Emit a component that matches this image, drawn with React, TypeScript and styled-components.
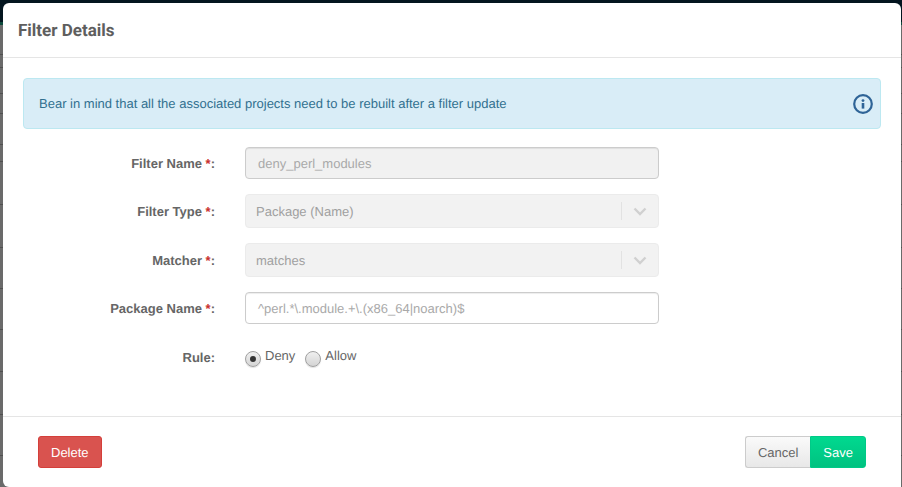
import React from "react";
import styled, { createGlobalStyle } from "styled-components";

const Global = createGlobalStyle`
  html, body { margin: 0; padding: 0; height: 100%; overflow: hidden; }
  body { background: #6b6b6b; font-family: "Liberation Sans", Arial, sans-serif; text-rendering: geometricPrecision; }
  #root { height: 100%; }
`;

const pageRules = [54, 67, 93, 113, 144, 161, 204, 247, 288, 329, 371, 414, 455]
  .map((y) => `linear-gradient(#505050, #505050) 0 ${y}px / 100% 1px no-repeat`)
  .join(",");

const Backdrop = styled.div`
  height: 487px;
  box-sizing: border-box;
  padding: 3px 1px 0 3px;
  overflow: hidden;
  background:
    linear-gradient(#03151f 0 22px, #0c4a3c 22px 25px, transparent 25px),
    ${pageRules},
    #6a6a6a;
`;

const Modal = styled.div`
  background: #fff;
  border-radius: 6px 6px 0 6px;
  height: 484px;
  display: flex;
  flex-direction: column;
  color: #666;
`;

const Header = styled.header`
  height: 55px;
  box-sizing: border-box;
  border-bottom: 1px solid #e5e5e5;
  padding: 1px 15px 0;
  display: flex;
  align-items: center;
`;

const Title = styled.h4`
  margin: 0;
  font: 700 17px/20px Roboto, "Liberation Sans", sans-serif;
  color: #5e5e5e;
`;

const Body = styled.div`
  height: 359px;
  box-sizing: border-box;
  border-bottom: 1px solid #e5e5e5;
  padding: 20px 20px 0 20px;
`;

const Alert = styled.div`
  height: 51px;
  box-sizing: border-box;
  background: #d9edf7;
  border: 1px solid #bce8f1;
  border-radius: 4px;
  color: #31708f;
  font-size: 13px;
  padding: 0 17px 0 15px;
  display: flex;
  align-items: center;
  justify-content: space-between;
`;

const InfoIcon = styled.svg`
  width: 20px;
  height: 20px;
  margin-right: -10px;
  flex: none;
`;

const Form = styled.div`
  margin-top: 18px;
  display: flex;
  flex-direction: column;
`;

const Row = styled.div<{ $h: number; $mb: number }>`
  display: grid;
  grid-template-columns: 192px 414px;
  column-gap: 30px;
  align-items: center;
  height: ${(p) => p.$h}px;
  margin-bottom: ${(p) => p.$mb}px;
`;

const Label = styled.label`
  font-size: 13px;
  font-weight: 700;
  text-align: right;
  color: #666;
`;

const Req = styled.span`
  color: #c9302c;
`;

const TextInput = styled.div<{ $disabled?: boolean }>`
  height: 32px;
  box-sizing: border-box;
  border: 1px solid #ccc;
  border-radius: 4px;
  padding: 0 12px;
  display: flex;
  align-items: center;
  font-size: 13px;
  color: #a9a9a9;
  background: ${(p) => (p.$disabled ? "#f1f1f1" : "#fff")};
  box-shadow: inset 0 1px 1px rgba(0, 0, 0, 0.075);
`;

const Select = styled.div`
  height: 34px;
  box-sizing: border-box;
  border: 1px solid #ebebeb;
  border-radius: 4px;
  background: #f2f2f2;
  padding: 0 10px;
  display: flex;
  align-items: center;
  justify-content: space-between;
  font-size: 13px;
  color: #a0a0a0;
`;

const Indicator = styled.div`
  display: flex;
  align-items: center;
  height: 18px;
  border-left: 1px solid #e2e2e2;
  padding-left: 11px;
  margin-right: 1px;
`;

const Radios = styled.div`
  display: flex;
  align-items: center;
  gap: 10px;
`;

const RadioLabel = styled.span`
  display: flex;
  align-items: flex-start;
  gap: 4px;
  font-size: 13px;
  line-height: 15px;
  color: #666;
`;

const RadioDot = styled.span<{ $on?: boolean }>`
  width: 16px;
  height: 16px;
  box-sizing: border-box;
  border-radius: 50%;
  border: 1px solid #a0a0a0;
  background: linear-gradient(#f0f0f0, #d4d4d4);
  box-shadow: 0 1px 1px rgba(0, 0, 0, 0.12);
  margin-top: 3px;
  display: flex;
  align-items: center;
  justify-content: center;
  &::after {
    content: "";
    width: 6px;
    height: 6px;
    border-radius: 50%;
    background: #333;
    display: ${(p) => (p.$on ? "block" : "none")};
  }
`;

const Footer = styled.footer`
  padding: 19px 35px 0;
  display: flex;
  justify-content: space-between;
`;

const Btn = styled.button<{ $kind: "danger" | "default" | "success" }>`
  height: 32px;
  box-sizing: border-box;
  padding: 0 12px;
  font: 13px "Liberation Sans", sans-serif;
  text-rendering: geometricPrecision;
  border: 1px solid
    ${(p) => (p.$kind === "danger" ? "#d43f3a" : p.$kind === "success" ? "#00c987" : "#ccc")};
  border-radius: 3px;
  color: ${(p) => (p.$kind === "default" ? "#666" : "#fff")};
  background: ${(p) =>
    p.$kind === "danger"
      ? "#d9534f"
      : p.$kind === "success"
        ? "linear-gradient(#00d98f, #00c280)"
        : "linear-gradient(#fafafa, #e8e8e8)"};
`;

const BtnGroup = styled.div`
  display: flex;
  & > button:first-child { border-radius: 3px 0 0 3px; border-right: 0; }
  & > button:last-child { border-radius: 0 3px 3px 0; }
`;

const Chevron = () => (
  <svg width="14" height="9" viewBox="0 0 14 9" fill="none">
    <path d="M1.5 1.5 7 7l5.5-5.5" stroke="#d0d0d0" strokeWidth="2.4" />
  </svg>
);

export default function App() {
  return (
    <>
      <Global />
      <Backdrop>
        <Modal>
          <Header>
            <Title>Filter Details</Title>
          </Header>
          <Body>
            <Alert>
              <span>Bear in mind that all the associated projects need to be rebuilt after a filter update</span>
              <InfoIcon viewBox="0 0 20 20" fill="none">
                <circle cx="10" cy="10" r="8.8" stroke="#2f6497" strokeWidth="2.2" />
                <circle cx="10" cy="6.6" r="1.4" fill="#2f6497" />
                <rect x="8.7" y="9" width="2.6" height="5.6" fill="#2f6497" />
              </InfoIcon>
            </Alert>
            <Form>
              <Row $h={32} $mb={15}>
                <Label>Filter Name <Req>*</Req>:</Label>
                <TextInput $disabled>deny_perl_modules</TextInput>
              </Row>
              <Row $h={34} $mb={15}>
                <Label>Filter Type <Req>*</Req>:</Label>
                <Select>
                  <span>Package (Name)</span>
                  <Indicator><Chevron /></Indicator>
                </Select>
              </Row>
              <Row $h={34} $mb={15}>
                <Label>Matcher <Req>*</Req>:</Label>
                <Select>
                  <span>matches</span>
                  <Indicator><Chevron /></Indicator>
                </Select>
              </Row>
              <Row $h={32} $mb={18}>
                <Label>Package Name <Req>*</Req>:</Label>
                <TextInput>^perl.*\.module.+\.(x86_64|noarch)$</TextInput>
              </Row>
              <Row $h={30} $mb={0}>
                <Label>Rule:</Label>
                <Radios>
                  <RadioLabel><RadioDot $on />Deny</RadioLabel>
                  <RadioLabel><RadioDot />Allow</RadioLabel>
                </Radios>
              </Row>
            </Form>
          </Body>
          <Footer>
            <Btn $kind="danger">Delete</Btn>
            <BtnGroup>
              <Btn $kind="default">Cancel</Btn>
              <Btn $kind="success">Save</Btn>
            </BtnGroup>
          </Footer>
        </Modal>
      </Backdrop>
    </>
  );
}
